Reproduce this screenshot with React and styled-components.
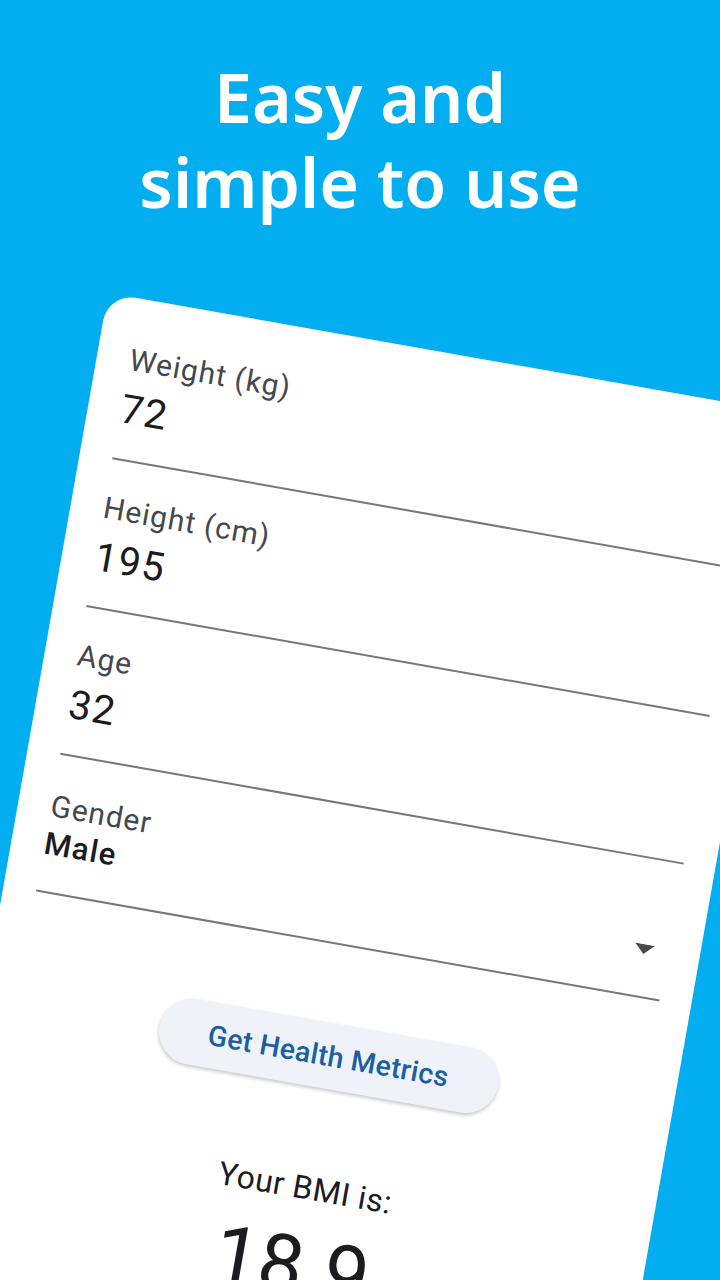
import React from 'react';
import styled, { createGlobalStyle } from 'styled-components';

const GlobalStyle = createGlobalStyle`
  html, body {
    margin: 0;
    padding: 0;
  }
  body {
    background: #02aeef;
  }
`;

const Screen = styled.div`
  width: 720px;
  height: 1280px;
  overflow: hidden;
  box-sizing: border-box;
  padding-top: 54px;
  background: #02aeef;
`;

const Headline = styled.h1`
  margin: 0;
  font-family: "Noto Sans", sans-serif;
  font-weight: 600;
  font-size: 68px;
  line-height: 85px;
  color: #ffffff;
  text-align: center;
`;

const Card = styled.div`
  width: 698px;
  height: 1100px;
  margin: 69px 0 0 108px;
  box-sizing: border-box;
  padding: 13px 32px 0 33px;
  background: #ffffff;
  border-radius: 28px;
  transform: rotate(10deg);
  transform-origin: 0 0;
  font-family: Roboto, sans-serif;
`;

const Field = styled.div`
  padding: ${p => (p.$select ? '34px 0 29px' : '31px 0 25px')};
  border-bottom: 2px solid #75777c;
`;

const Label = styled.div`
  font-size: 30px;
  line-height: 36px;
  letter-spacing: 1px;
  color: #46474c;
`;

const Value = styled.div`
  margin-top: 8px;
  font-size: 40px;
  line-height: 48px;
  letter-spacing: 1.2px;
  color: #1c1b1f;
`;

const SelectRow = styled.div`
  display: flex;
  align-items: center;
  justify-content: space-between;
  height: 36px;
  margin-top: 2px;
  padding-right: 14px;
`;

const Selected = styled.span`
  font-size: 31px;
  line-height: 36px;
  font-weight: 500;
  letter-spacing: 1.2px;
  color: #1c1b1f;
`;

const Caret = styled.svg`
  width: 20px;
  height: 10px;
  flex-shrink: 0;
`;

const ActionButton = styled.button`
  display: block;
  width: 344px;
  height: 66px;
  margin: 78px auto 0;
  border: none;
  border-radius: 33px;
  background: #eff3f9;
  box-shadow: 0 2px 4px rgba(0, 0, 0, 0.22);
  font-family: Roboto, sans-serif;
  font-weight: 500;
  font-size: 28.5px;
  letter-spacing: 0.3px;
  color: #1b5fa3;
`;

const ResultLabel = styled.div`
  margin-top: 82px;
  font-size: 32px;
  line-height: 38px;
  letter-spacing: 0.5px;
  text-align: center;
  color: #1c1b1f;
`;

const ResultValue = styled.div`
  margin-top: 13px;
  font-size: 80px;
  line-height: 94px;
  text-align: center;
  color: #1c1b1f;
`;

const fields = [
  { label: 'Weight (kg)', value: '72' },
  { label: 'Height (cm)', value: '195' },
  { label: 'Age', value: '32' },
];

export default function App() {
  return (
    <>
      <GlobalStyle />
      <Screen>
        <Headline>
          Easy and
          <br />
          simple to use
        </Headline>
        <Card>
          {fields.map(f => (
            <Field key={f.label}>
              <Label>{f.label}</Label>
              <Value>{f.value}</Value>
            </Field>
          ))}
          <Field $select>
            <Label>Gender</Label>
            <SelectRow>
              <Selected>Male</Selected>
              <Caret viewBox="0 0 20 10">
                <path d="M0 0 L20 0 L10 10 Z" fill="#4a4a4e" />
              </Caret>
            </SelectRow>
          </Field>
          <ActionButton>Get Health Metrics</ActionButton>
          <ResultLabel>Your BMI is:</ResultLabel>
          <ResultValue>18.9</ResultValue>
        </Card>
      </Screen>
    </>
  );
}
